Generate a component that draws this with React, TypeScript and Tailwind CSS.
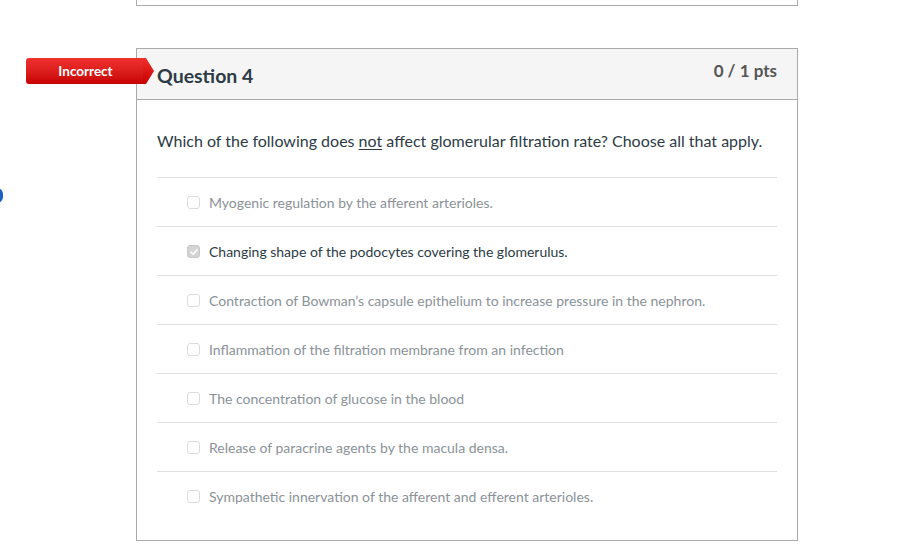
import React from 'react';

const answers = [
  { text: 'Myogenic regulation by the afferent arterioles.', checked: false },
  { text: 'Changing shape of the podocytes covering the glomerulus.', checked: true },
  { text: 'Contraction of Bowman\u2019s capsule epithelium to increase pressure in the nephron.', checked: false },
  { text: 'Inflammation of the filtration membrane from an infection', checked: false },
  { text: 'The concentration of glucose in the blood', checked: false },
  { text: 'Release of paracrine agents by the macula densa.', checked: false },
  { text: 'Sympathetic innervation of the afferent and efferent arterioles.', checked: false },
];

const Checkbox = ({ checked }: { checked: boolean }) => (
  <span
    className={`flex h-[13px] w-[13px] shrink-0 items-center justify-center rounded-[3px] border ${
      checked ? 'border-[#c8c8c8] bg-[#d4d4d4]' : 'border-[#dcdcdc] bg-white'
    }`}
  >
    {checked && (
      <svg viewBox="0 0 12 12" className="h-[10px] w-[10px]">
        <path d="M2.5 6.2 L5 8.6 L9.6 3.4" fill="none" stroke="#fff" strokeWidth="1.8" strokeLinecap="round" strokeLinejoin="round" />
      </svg>
    )}
  </span>
);

export default function App() {
  return (
    <div className="relative min-h-[554px] bg-white font-['Lato','Open_Sans',sans-serif] text-[#2d3b45]">
      <span className="absolute left-[-9px] top-[188px] h-[15px] w-[12px] rounded-full bg-[#1b5fc9]" />

      <div className="ml-[136px] w-[662px]">
        <div className="h-[6px] border-x border-b border-[#aaaaaa]" />

        <div className="relative mt-[42px] border border-[#aaaaaa]">
          <div className="absolute left-[-111px] top-[9px] flex h-[26px] items-stretch">
            <div className="flex w-[117px] items-center justify-center rounded-l-[3px] bg-gradient-to-b from-[#f0302e] to-[#c70000] pl-[2px] text-[13.5px] font-bold text-white">
              Incorrect
            </div>
            <svg width="11" height="26" viewBox="0 0 11 26" className="block">
              <defs>
                <linearGradient id="rg" x1="0" y1="0" x2="0" y2="1">
                  <stop offset="0" stopColor="#f0302e" />
                  <stop offset="1" stopColor="#c70000" />
                </linearGradient>
              </defs>
              <path d="M0 0 L3 0 L11 13 L3 26 L0 26 Z" fill="url(#rg)" />
            </svg>
          </div>

          <div className="flex h-[51px] items-start justify-between border-b border-[#aaaaaa] bg-[#f5f5f5] px-[20px]">
            <h2 className="pt-[15px] text-[19.5px] font-bold leading-[24px]">Question 4</h2>
            <div className="pt-[12px] text-[17px] font-bold leading-[20px] text-[#555555]">0 / 1 pts</div>
          </div>

          <div className="px-[20px] pb-[20px] pt-[31px]">
            <p className="mb-[26px] text-[16px] leading-[20px]">
              Which of the following does <span className="underline underline-offset-2">not</span> affect glomerular
              filtration rate? Choose all that apply.
            </p>
            <ul>
              {answers.map((a) => (
                <li
                  key={a.text}
                  className="flex h-[49px] items-center gap-[9px] border-t border-[#e0e0e0] pl-[30px] pt-[1px] text-[14px]"
                >
                  <Checkbox checked={a.checked} />
                  <span className={a.checked ? 'text-[#2d3b45]' : 'text-[#8b9298]'}>{a.text}</span>
                </li>
              ))}
            </ul>
          </div>
        </div>
      </div>
    </div>
  );
}
